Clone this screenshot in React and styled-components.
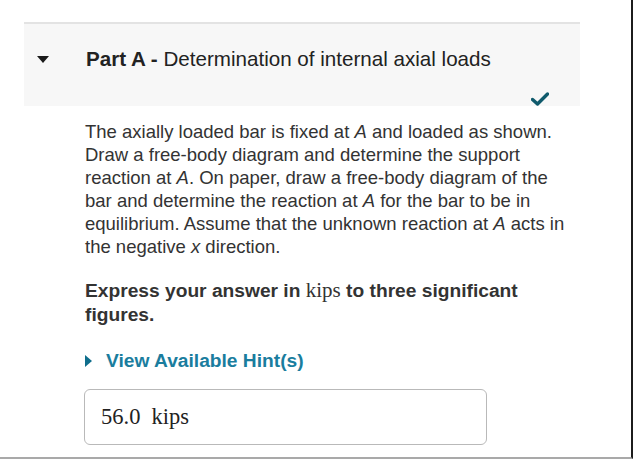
import React from "react";
import styled, { createGlobalStyle } from "styled-components";

const Global = createGlobalStyle`
  html, body { margin: 0; padding: 0; background: #fff; }
  body { font-family: "Liberation Sans", Arial, sans-serif; }
`;

const Frame = styled.div`
  width: 631px;
  height: 457px;
  border-right: 2px solid #1c1c1c;
  border-bottom: 2px solid #a9a9a9;
  overflow: hidden;
  position: relative;
`;

const Panel = styled.section`
  margin: 22px 0 0 24px;
  width: 556px;
  height: 82px;
  border-top: 2px solid #e3e3e3;
  background: #f7f7f7;
  position: relative;
`;

const Header = styled.div`
  display: flex;
  align-items: center;
  height: 70px;
  padding-left: 13px;
`;

const Caret = styled.span`
  width: 0;
  height: 0;
  border-left: 6px solid transparent;
  border-right: 6px solid transparent;
  border-top: 7px solid #1a1a1a;
  margin-right: 37px;
`;

const Title = styled.h2`
  margin: 0;
  font-size: 20.6px;
  font-weight: normal;
  color: #222;
  white-space: nowrap;
  b { font-weight: bold; }
`;

const Check = styled.svg`
  position: absolute;
  left: 507px;
  top: 68px;
`;

const Body = styled.div`
  padding: 14px 0 0 85px;
  color: #333;
`;

const Para = styled.p`
  margin: 0;
  font-size: 18.5px;
  line-height: 23px;
  white-space: nowrap;
  i { font-style: italic; }
`;

const Instruction = styled.p`
  margin: 20px 0 0;
  font-size: 19.2px;
  line-height: 24px;
  font-weight: bold;
  color: #333;
  white-space: nowrap;
`;

const Math = styled.span`
  font-family: "Liberation Serif", "DejaVu Serif", serif;
  font-weight: normal;
  font-size: 21px;
`;

const Hint = styled.div`
  display: flex;
  align-items: center;
  margin-top: 22px;
  color: #1a7d9e;
  font-weight: bold;
  font-size: 19.2px;
  height: 24px;
`;

const HintArrow = styled.span`
  width: 0;
  height: 0;
  border-top: 6px solid transparent;
  border-bottom: 6px solid transparent;
  border-left: 7px solid #0f6e8c;
  margin-right: 14px;
`;

const AnswerBox = styled.div`
  margin-top: 16px;
  width: 403px;
  height: 56px;
  margin-left: -1px;
  border: 1px solid #b9b9b9;
  border-radius: 6px;
  display: flex;
  align-items: center;
  padding-left: 16px;
  box-sizing: border-box;
  font-family: "Liberation Serif", "Times New Roman", serif;
  font-size: 22.5px;
  color: #222;
  gap: 11px;
`;

export default function App() {
  return (
    <>
      <Global />
      <Frame>
        <Panel>
          <Header>
            <Caret />
            <Title>
              <b>Part A - </b>Determination of internal axial loads
            </Title>
          </Header>
          <Check width="18" height="14" viewBox="0 0 18 14">
            <path
              d="M1.5 7.5 L6.5 12 L16.5 2"
              fill="none"
              stroke="#0f5a6c"
              strokeWidth="3.4"
              strokeLinecap="round"
              strokeLinejoin="round"
            />
          </Check>
        </Panel>
        <Body>
          <Para>
            The axially loaded bar is fixed at <i>A</i> and loaded as shown.
            <br />
            Draw a free-body diagram and determine the support
            <br />
            reaction at <i>A</i>. On paper, draw a free-body diagram of the
            <br />
            bar and determine the reaction at <i>A</i> for the bar to be in
            <br />
            equilibrium. Assume that the unknown reaction at <i>A</i> acts in
            <br />
            the negative <i>x</i> direction.
          </Para>
          <Instruction>
            Express your answer in <Math>kips</Math> to three significant
            <br />
            figures.
          </Instruction>
          <Hint>
            <HintArrow />
            View Available Hint(s)
          </Hint>
          <AnswerBox>
            <span>56.0</span>
            <span>kips</span>
          </AnswerBox>
        </Body>
      </Frame>
    </>
  );
}
